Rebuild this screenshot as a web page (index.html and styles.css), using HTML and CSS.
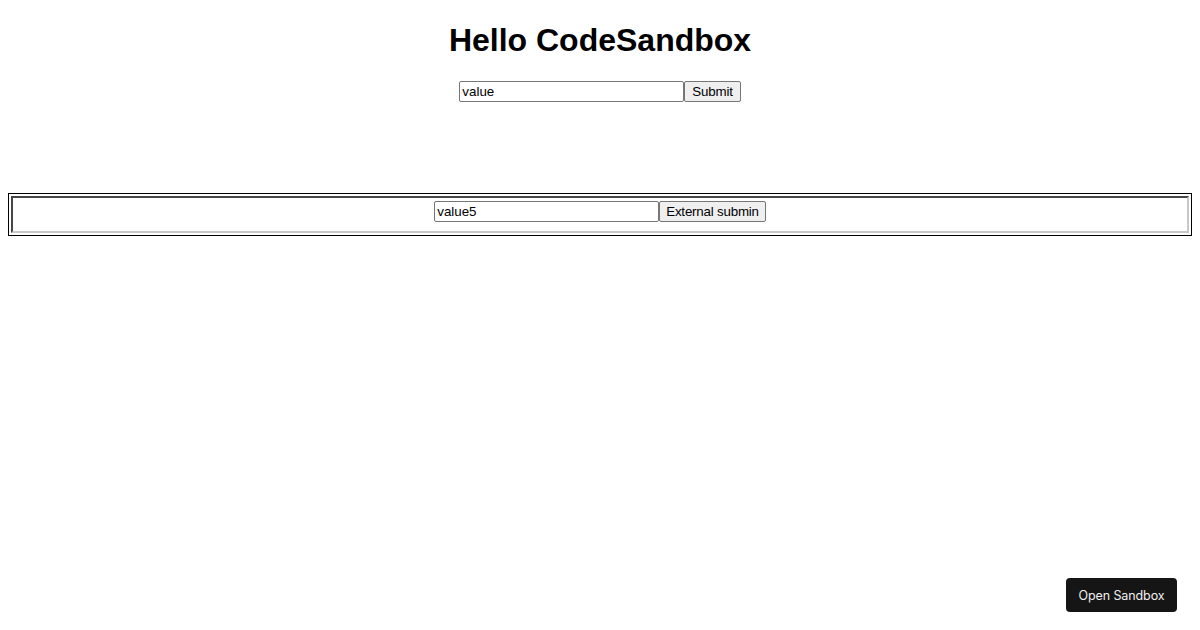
FILE: index.html
```html
<!DOCTYPE html>
<html>
<head>
<meta charset="utf-8">
<link rel="stylesheet" href="styles.css">
</head>
<body>
<div class="app">
  <h1 class="title">Hello CodeSandbox</h1>
  <form class="form">
    <input class="field" type="text" value="value"><button class="btn btn-submit" type="button">Submit</button>
  </form>
  <div class="frame">
    <div class="frame-inner">
      <input class="field" type="text" value="value5"><button class="btn" type="button">External submin</button>
    </div>
  </div>
</div>
<a class="open-sandbox">Open Sandbox</a>
</body>
</html>
```
FILE: styles.css
```css
html, body {
  background: #fff;
}
body {
  margin: 8px;
  font-family: "Liberation Sans", Arial, sans-serif;
  color: #000;
}
.app {
  text-align: center;
}
.title {
  font-size: 32px;
  font-weight: bold;
  margin: 14px 0 22px;
  line-height: 37px;
}
.form {
  margin: 0;
  height: 21px;
  display: flex;
  justify-content: center;
}
.field {
  box-sizing: border-box;
  width: 225px;
  height: 21px;
  border: 1px solid #767676;
  border-radius: 2px;
  padding: 1px 2px;
  font-family: "Liberation Sans", Arial, sans-serif;
  font-size: 13.33px;
  color: #000;
  margin: 0;
  background: #fff;
}
.btn {
  box-sizing: border-box;
  height: 21px;
  border: 1px solid #767676;
  border-radius: 2px;
  background: #efefef;
  padding: 1px 6px;
  font-family: "Liberation Sans", Arial, sans-serif;
  font-size: 13.33px;
  letter-spacing: -0.2px;
  color: #000;
  margin: 0;
}
.btn-submit {
  padding: 1px 7px;
}
.frame {
  margin-top: 91px;
  border: 1px solid #000;
  padding: 2px;
}
.frame-inner {
  border: 2px inset #a0a0a0;
  border-color: #9a9a9a #c8c8c8 #c8c8c8 #9a9a9a;
  padding: 3px 0 9px;
  display: flex;
  justify-content: center;
}
.open-sandbox {
  position: fixed;
  right: 23px;
  bottom: 18px;
  width: 111px;
  height: 34px;
  box-sizing: border-box;
  background: #151515;
  border-radius: 4px;
  color: #f0f0f0;
  font-family: Inter, "Liberation Sans", sans-serif;
  font-size: 12.5px;
  letter-spacing: -0.1px;
  display: flex;
  align-items: center;
  justify-content: center;
}
```
